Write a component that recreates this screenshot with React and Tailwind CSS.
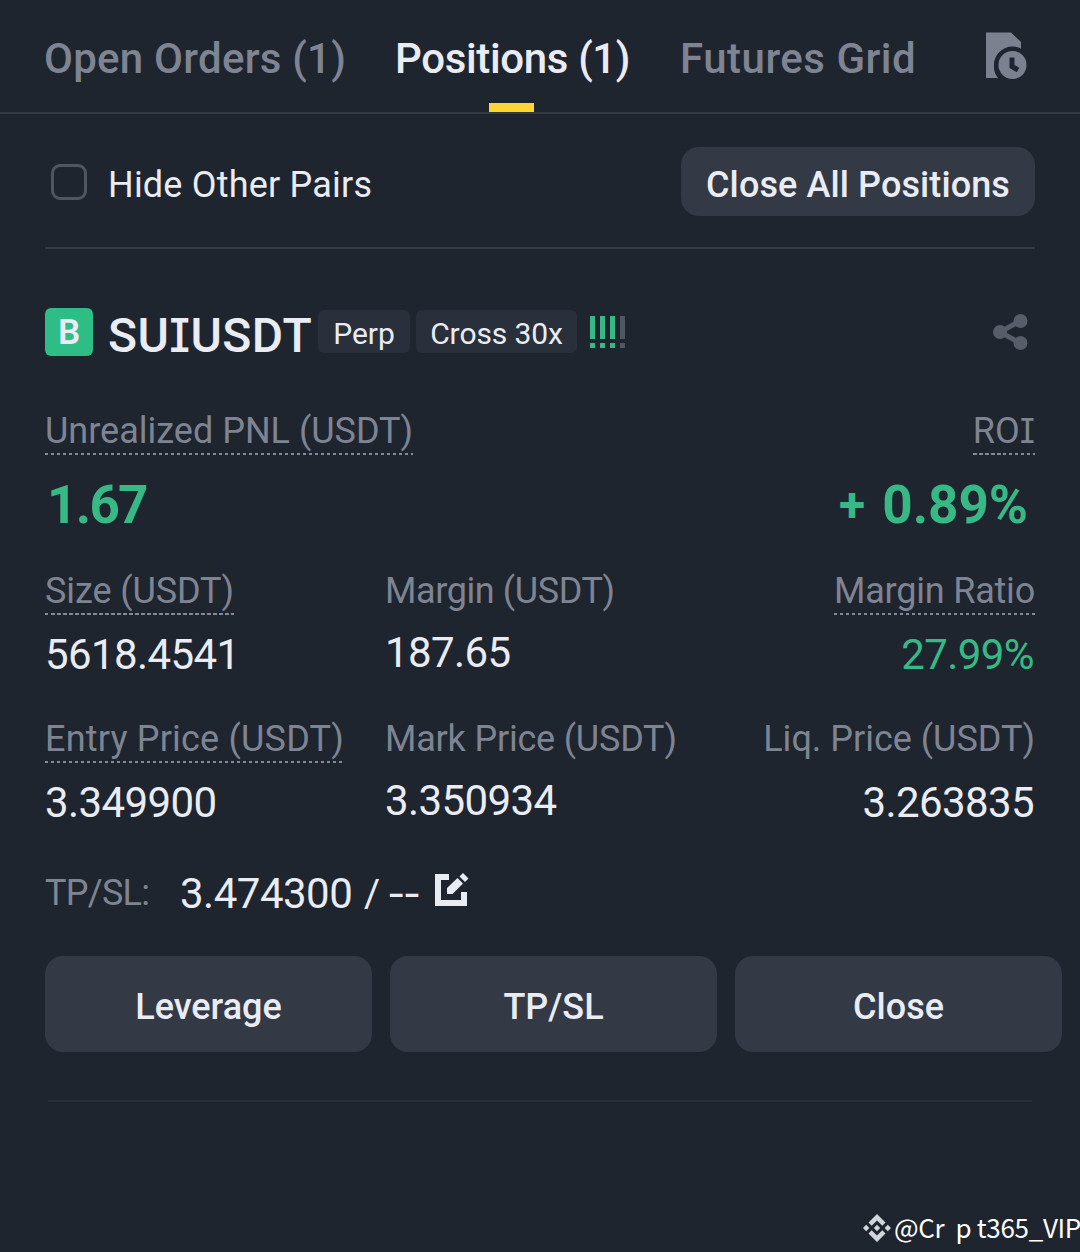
import React from 'react';

const tabs = [
    { name: 'Open Orders (1)', box: 'w-[350px] -ml-px mr-px tracking-[0.25px]' },
    { name: 'Positions (1)', box: 'w-[286px] tracking-[-0.35px]', active: true },
    { name: 'Futures Grid', box: 'w-[301px] -ml-px tracking-[0.5px]' },
];

const stats = [
    { label: 'Size (USDT)', value: '5618.4541', hint: true, spacing: 'tracking-[-0.1px]' },
    { label: 'Margin (USDT)', value: '187.65', raised: true, spacing: 'tracking-[-0.4px]' },
    { label: 'Margin Ratio', value: '27.99%', hint: true, end: true, green: true, spacing: 'tracking-[-0.2px]' },
    { label: 'Entry Price (USDT)', value: '3.349900', hint: true, spacing: 'tracking-[0.2px]' },
    { label: 'Mark Price (USDT)', value: '3.350934', raised: true, spacing: 'tracking-[-0.2px]' },
    { label: 'Liq. Price (USDT)', value: '3.263835', end: true },
];

function HistoryIcon() {
    return (
        <svg width="42" height="48" viewBox="0 0 42 48" fill="none">
            <path d="M0 0.5H25L35 10V17A19 19 0 0 0 12 46H0Z" fill="#7b818e" />
            <circle cx="26.5" cy="33" r="18.5" fill="#1f252f" />
            <circle cx="26.5" cy="33" r="14" fill="#7b818e" />
            <path d="M26 25.5V34.5L32 38" stroke="#1f252f" strokeWidth="5" />
        </svg>
    );
}

function SignalIcon() {
    return (
        <svg width="36" height="32" viewBox="0 0 36 32" fill="#36b985">
            <path d="M0 0h5v23H0zM10 0h5v23h-5zM20 0h5v23h-5zM0 27h5v5H0zM10 27h5v5h-5zM20 27h5v5h-5z" />
            <path d="M30 0h5v23h-5zM30 27h5v5h-5z" fill="#505662" />
        </svg>
    );
}

function ShareIcon() {
    return (
        <svg width="35" height="36" viewBox="0 0 35 36" fill="#575d69">
            <path d="M27 7L7 18L27 29" fill="none" stroke="#575d69" strokeWidth="5" />
            <circle cx="7" cy="18" r="7" />
            <circle cx="27.5" cy="7" r="7" />
            <circle cx="27.5" cy="29" r="7" />
        </svg>
    );
}

function EditIcon() {
    return (
        <svg width="34" height="34" viewBox="0 0 34 34" fill="#eaecf3">
            <path d="M0 1H14V7H6V27H26V19H32V33H0Z" />
            <path d="M12 15L22.5 5L28 10.5L17.5 21H12Z" />
            <path d="M24.5 3.5L28 0L33.5 5.5L30 9Z" />
        </svg>
    );
}

function DiamondLogo() {
    return (
        <svg width="28" height="28" viewBox="0 0 28 28" fill="#d2d5dc">
            <path d="M14 0L22.5 8.5L19.3 11.7L14 6.4L8.7 11.7L5.5 8.5Z" />
            <path d="M14 28L22.5 19.5L19.3 16.3L14 21.6L8.7 16.3L5.5 19.5Z" />
            <path d="M3.2 10.8L6.4 14L3.2 17.2L0 14ZM24.8 10.8L28 14L24.8 17.2L21.6 14ZM14 10.8L17.2 14L14 17.2L10.8 14Z" />
        </svg>
    );
}

// capital I with slab serifs
function SerifI() {
    return <span className="font-['Inter'] [font-feature-settings:'cv08'] text-[0.96em]">I</span>;
}

function Label({ children, hint, spacing }) {
    return (
        <div className={`h-12 w-fit text-[36px] leading-[48px] text-[#7e8491] whitespace-nowrap ${spacing || ''}`}>
            {children}
            {hint && (
                <div className="-mt-0.5 h-[1.5px] bg-[repeating-linear-gradient(90deg,#848a97_0_3.5px,transparent_3.5px_6px)]" />
            )}
        </div>
    );
}

function Stat({ label, value, hint, raised, end, green, spacing }) {
    return (
        <div className={`flex flex-col ${end ? 'items-end' : 'items-start'}`}>
            <Label hint={hint} spacing={spacing}>{label}</Label>
            <div
                className={`text-[42px] leading-[48px] tracking-[-0.6px] whitespace-nowrap ${raised ? 'mt-3.5' : 'mt-4'} ${
                    green ? 'text-[#36b985]' : 'text-[#eaecf3]'
                } ${end ? 'pr-px' : ''}`}
            >
                {value}
            </div>
        </div>
    );
}

export default function App() {
    return (
        <div className="w-[1080px] h-[1252px] overflow-hidden flex flex-col bg-[#1f252f] font-['Roboto',sans-serif] text-[#eaecf3]">
            <header className="h-[114px] shrink-0 flex pl-[45px] pt-1 border-b-2 border-[#333945]">
                {tabs.map(tab => (
                    <div
                        key={tab.name}
                        className={`relative text-[42px] leading-[109px] font-medium whitespace-nowrap ${tab.box} ${
                            tab.active ? 'text-[#eaecf3]' : 'text-[#7e8491]'
                        }`}
                    >
                        {tab.name}
                        {tab.active && (
                            <div className="absolute bottom-0 left-[94px] w-[45px] h-[9px] bg-[#fcd535]" />
                        )}
                    </div>
                ))}
                <div className="pt-7 pl-[5px]">
                    <HistoryIcon />
                </div>
            </header>

            <section className="mx-[45px] h-[135px] shrink-0 flex items-start justify-between border-b-2 border-[#333945]">
                <label className="flex pl-1.5 pt-[50px]">
                    <div className="size-9 rounded-[9px] border-3 border-[#4f5561]" />
                    <div className="ml-[21px] pt-0.5 text-[36px] leading-[38px] tracking-[0.2px]">Hide Other Pairs</div>
                </label>
                <button className="mt-[33px] w-[354px] h-[69px] pt-2 rounded-[18px] bg-[#333945] text-[36px] leading-[61px] font-medium tracking-[0.1px] whitespace-nowrap">
                    Close All Positions
                </button>
            </section>

            <section className="mt-[59px] mx-[45px] h-12 shrink-0 flex items-start">
                <div className="size-12 rounded-md bg-[#2ebd85] text-center text-[35px] leading-[50px] font-semibold">B</div>
                <div className="ml-[15px] w-[210px] text-[48px] leading-[55px] font-medium tracking-[0.4px] whitespace-nowrap">
                    SU<SerifI />USDT
                </div>
                <div className="mt-0.5 w-[92px] h-[43px] pt-0.5 rounded-md bg-[#2a303b] text-center text-[30px] leading-[44px]">
                    Perp
                </div>
                <div className="mt-0.5 ml-1.5 w-[161px] h-[43px] pt-0.5 rounded-md bg-[#2a303b] text-center text-[30px] leading-[44px] tracking-[-0.1px] whitespace-nowrap">
                    Cross 30x
                </div>
                <div className="mt-2 ml-[13px]">
                    <SignalIcon />
                </div>
                <div className="mt-1.5 ml-auto mr-[7px]">
                    <ShareIcon />
                </div>
            </section>

            <section className="mt-[51px] mx-[45px] shrink-0 flex justify-between">
                <div>
                    <Label hint>Unrealized PNL (USDT)</Label>
                    <div className="mt-[22px] ml-0.5 text-[53px] leading-[56px] font-bold tracking-[-1.7px] text-[#36b985]">
                        1.67
                    </div>
                </div>
                <div className="flex flex-col items-end">
                    <Label hint>RO<SerifI /></Label>
                    <div className="mt-[22px] mr-[7px] flex text-[53px] leading-[56px] font-bold whitespace-nowrap text-[#36b985]">
                        <span className="mr-[17px] text-[48px]">+</span>
                        <span>0.89%</span>
                    </div>
                </div>
            </section>

            <section className="mt-[34px] mx-[45px] shrink-0 grid grid-cols-[340px_380px_270px] gap-y-9">
                {stats.map(stat => (
                    <Stat key={stat.label} {...stat} />
                ))}
            </section>

            <section className="mt-[42px] mx-[45px] h-12 shrink-0 flex items-start">
                <div className="w-[135px] text-[36px] leading-[48px] tracking-[-0.7px] text-[#7e8491]">TP/SL:</div>
                <div className="w-[255px] flex text-[42px] leading-[50px] whitespace-nowrap">
                    <span className="w-[184px] tracking-[-0.5px]">3.474300</span>
                    <span className="w-[25px] text-[39px]">/</span>
                    <span className="origin-left scale-x-[1.25] tracking-[1px]">--</span>
                </div>
                <div className="mt-1">
                    <EditIcon />
                </div>
            </section>

            <section className="mt-[39px] ml-[45px] shrink-0 flex gap-[18px]">
                {['Leverage', 'TP/SL', 'Close'].map(action => (
                    <button
                        key={action}
                        className="w-[327px] h-24 pt-1.5 rounded-[18px] bg-[#333945] text-[36px] leading-[90px] font-medium"
                    >
                        {action}
                    </button>
                ))}
            </section>

            <div className="mt-12 mx-12 h-0.5 shrink-0 bg-[#292f3a]" />

            <footer className="mt-auto h-12 shrink-0 flex items-center justify-end">
                <DiamondLogo />
                <div className="-mt-[3px] ml-[3px] w-[186px] font-['Noto_Sans_CJK_SC',sans-serif] text-[26px] leading-[48px] tracking-[-0.3px] whitespace-pre text-white">
                    @Cr  p t365_VIP
                </div>
            </footer>
        </div>
    );
}
